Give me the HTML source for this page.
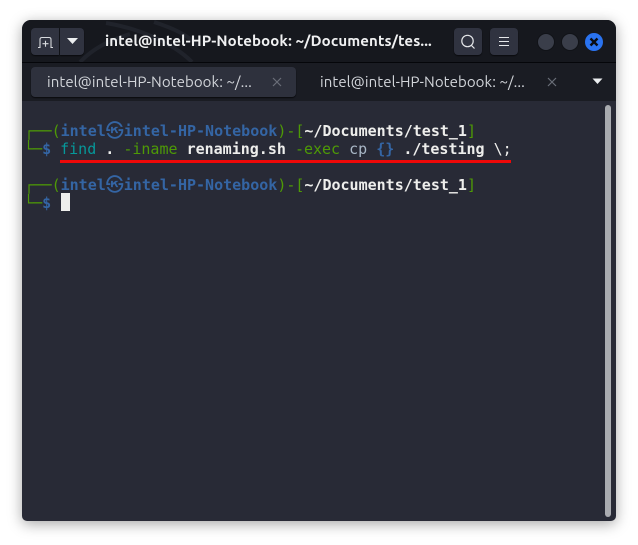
<!DOCTYPE html>
<html><head><meta charset="utf-8">
<style>
html,body{margin:0;padding:0;background:#fff;width:638px;height:545px;overflow:hidden}
#win{position:absolute;left:22px;top:20px;width:594px;height:501px;border-radius:9px 9px 5px 5px;background:#282a36;box-shadow:0 3px 14px rgba(0,0,0,.35);overflow:hidden}
#hdr{position:absolute;left:0;top:0;width:594px;height:42px;background:#16181e;border-bottom:1px solid #05060a}
#tabs{position:absolute;left:0;top:43px;width:594px;height:38px;background:#1a1c23}
.btn{position:absolute;background:#303340;border-radius:4px;box-shadow:0 1px 1px #0a0b0e}
.t{position:absolute;white-space:nowrap;font-family:"Ubuntu","DejaVu Sans",sans-serif}
.c{position:absolute;width:18px;height:18px;border-radius:50%;background:#3a3e4a;border:1px solid #111318;box-sizing:border-box}
#term{position:absolute;left:0;top:0;font:15px/18px "DejaVu Sans Mono","Liberation Mono",monospace}
.l{position:absolute;white-space:pre;height:18px}
.g{color:#4e9a06}.b{color:#3465a4;font-weight:bold}.w{color:#eeeeec;font-weight:bold}.k{color:#06989a}.n{color:#4e9a06}
.s{position:absolute}
.m{display:inline-block;width:18px;height:18px;font-family:'Noto Sans CJK KR',sans-serif;font-size:18px;line-height:18px;font-weight:normal;text-align:center;vertical-align:top;position:relative;top:-1px}
</style></head><body>
<div id="win">
<div id="hdr">
<svg class="s" style="left:0;top:0" width="594" height="42" fill="none" stroke="#20232b" stroke-width="4"><path d="M84 3C115 8 150 22 170 42M58 42C72 28 84 22 108 14M132 2C150 8 165 14 176 26"/></svg>
<div class="btn" style="left:9px;top:8px;width:28px;height:27px;border-radius:4px 0 0 4px"></div>
<div class="btn" style="left:38px;top:8px;width:24px;height:27px;border-radius:0 4px 4px 0"></div>
<svg class="s" style="left:15px;top:15px" width="18" height="16" fill="none" stroke="#d8dade" stroke-width="1.100"><path d="M1 12.500h2V4.500q0-2 2-2h7q2 0 2 2v8h2M8.500 5.700v6M5.500 8.700h6"/></svg>
<svg class="s" style="left:44px;top:17px" width="13" height="8"><path d="M1 1h11L6.500 7z" fill="#eceef0"/></svg>
<div class="t" style="left:83px;top:12px;font-size:15px;line-height:18px;font-weight:bold;color:#f0f1f2;letter-spacing:.13px">intel@intel-HP-Notebook: ~/Documents/tes...</div>
<div class="btn" style="left:432px;top:8px;width:28px;height:27px"></div>
<svg class="s" style="left:437px;top:13px" width="18" height="18" fill="none" stroke="#e6e8ea" stroke-width="1.200"><circle cx="8.500" cy="8" r="5.700"/><path d="M12.500 12.500l3 3"/></svg>
<div class="btn" style="left:468px;top:8px;width:28px;height:27px"></div>
<svg class="s" style="left:476px;top:16px" width="12" height="12" stroke="#e6e8ea" stroke-width="1.100"><path d="M1 1.500h10M1 5.500h10M1 9.500h10"/></svg>
<div class="c" style="left:515px;top:13px"></div>
<div class="c" style="left:539px;top:13px"></div>
<div class="c" style="left:563px;top:13px;background:#2a73f0;border-color:#2a73f0"></div>
<svg class="s" style="left:563px;top:13px" width="18" height="18" stroke="#0a0c12" stroke-width="2.400"><path d="M5.500 5.500l7 7M12.500 5.500l-7 7"/></svg>
</div>
<div id="tabs">
<div class="btn" style="left:9px;top:4px;width:265px;height:30px;background:#2e313d"></div>
<div class="t" style="left:25px;top:10px;font-size:15px;line-height:18px;color:#d2d5da;letter-spacing:.08px">intel@intel-HP-Notebook: ~/...</div>
<svg class="s" style="left:250px;top:14px" width="10" height="10" stroke="#6a6e78" stroke-width="1.200"><path d="M1 1l8 8M9 1l-8 8"/></svg>
<div class="t" style="left:298px;top:10px;font-size:15px;line-height:18px;color:#d2d5da;letter-spacing:.08px">intel@intel-HP-Notebook: ~/...</div>
<svg class="s" style="left:525px;top:14px" width="10" height="10" stroke="#6a6e78" stroke-width="1.200"><path d="M1 1l8 8M9 1l-8 8"/></svg>
<svg class="s" style="left:570px;top:15px" width="11" height="7"><path d="M0.500 0.500h10L5.500 6z" fill="#eceef0"/></svg>
</div>
<div class="s" style="left:583px;top:85px;width:6px;height:412px;background:#a9abb0;border-radius:3px"></div>
<div id="term">
<div class="l" style="left:2.500px;top:102px"><span class="g">┌──(</span><span class="b">intel<span class="m">㉿</span>intel-HP-Notebook</span><span class="g">)-[</span><span class="w">~/Documents/test_1</span><span class="g">]</span></div>
<div class="l" style="left:2px;top:120px"><span class="g">└─</span><span class="b">$</span> <span class="k">find</span> <span class="w">.</span> <span class="n">-iname</span> <span class="w">renaming.sh</span> <span class="n">-exec</span> <span style="color:#a9b7c6">cp</span> <span class="b">{}</span> <span class="w">./testing</span> <span class="w" style="font-weight:normal">\;</span></div>
<div class="l" style="left:2.500px;top:156px"><span class="g">┌──(</span><span class="b">intel<span class="m">㉿</span>intel-HP-Notebook</span><span class="g">)-[</span><span class="w">~/Documents/test_1</span><span class="g">]</span></div>
<div class="l" style="left:2px;top:174px"><span class="g">└─</span><span class="b">$</span></div>
</div>
<div class="s" style="left:39px;top:173px;width:9px;height:18px;background:#eeeeec"></div>
<div class="s" style="left:38px;top:140px;width:451px;height:3px;background:#ee0808"></div>
</div>
</body></html>
